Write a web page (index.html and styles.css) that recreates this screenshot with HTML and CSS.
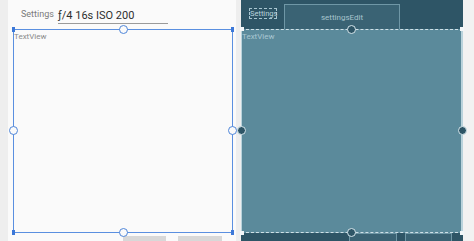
FILE: index.html
```html
<!DOCTYPE html>
<html>
<head>
<meta charset="utf-8">
<link rel="stylesheet" href="styles.css">
</head>
<body>
<div class="editor">
  <div class="design">
    <div class="screen">
      <div class="header">
        <span class="label">Settings</span>
        <span class="edit">ƒ/4 16s ISO 200</span>
      </div>
      <div class="textview">
        <span class="tv-label">TextView</span>
        <span class="sq sq-tl"></span><span class="sq sq-tr"></span>
        <span class="sq sq-bl"></span><span class="sq sq-br"></span>
        <span class="dot dot-t"></span><span class="dot dot-b"></span>
        <span class="dot dot-l"></span><span class="dot dot-r"></span>
      </div>
      <div class="buttons">
        <span class="btn"></span><span class="btn btn2"></span>
      </div>
    </div>
  </div>
  <div class="blueprint">
    <div class="bp-header">
      <span class="bp-label">Settings</span>
      <span class="bp-edit">settingsEdit</span>
    </div>
    <div class="bp-textview">
      <span class="bp-tv-label">TextView</span>
      <span class="wsq wsq-tl"></span><span class="wsq wsq-tr"></span>
      <span class="wsq wsq-bl"></span><span class="wsq wsq-br"></span>
      <span class="bdot bdot-t"></span><span class="bdot bdot-b"></span>
      <span class="bdot bdot-l"></span><span class="bdot bdot-r"></span>
    </div>
    <div class="bp-buttons">
      <span class="bp-btn"></span><span class="bp-btn bp-btn2"></span>
    </div>
  </div>
  <div class="rest"></div>
</div>
</body>
</html>
```
FILE: styles.css
```css
html, body {
  margin: 0;
  padding: 0;
  background: #f0f0f0;
  font-family: Roboto, "Noto Sans", sans-serif;
}
.editor {
  display: flex;
  width: 474px;
  height: 241px;
  overflow: hidden;
}
.design {
  width: 241px;
  flex: none;
  background: #eeeeee;
  padding-left: 8px;
  box-sizing: border-box;
}
.screen {
  width: 228px;
  height: 241px;
  background: #fafafa;
  display: flex;
  flex-direction: column;
}
.header {
  height: 29px;
  flex: none;
  display: flex;
  align-items: flex-start;
  padding-left: 13px;
  box-sizing: border-box;
}
.label {
  font-size: 9px;
  line-height: 11px;
  margin-top: 9px;
  color: #7a7a7a;
  width: 37px;
}
.edit {
  margin-top: 8px;
  width: 110px;
  height: 15px;
  line-height: 15px;
  font-size: 11px;
  color: #2e2e2e;
  border-bottom: 1px solid #9a9a9a;
}
.textview {
  position: relative;
  margin-left: 5px;
  width: 220px;
  height: 204px;
  flex: none;
  box-sizing: border-box;
  border: 1px solid #5a8fe0;
}
.tv-label {
  display: block;
  font-size: 8px;
  line-height: 10px;
  margin-top: 2px;
  color: #8a8a8a;
}
.sq {
  position: absolute;
  width: 3px;
  height: 5px;
  background: #3c78d8;
}
.sq-tl { left: -2px; top: -3px; }
.sq-tr { right: -2px; top: -3px; }
.sq-bl { left: -2px; bottom: -3px; }
.sq-br { right: -2px; bottom: -3px; }
.dot {
  position: absolute;
  width: 7px;
  height: 7px;
  border-radius: 50%;
  border: 1px solid #4f86d9;
  background: #fafafa;
}
.dot-t { left: 105px; top: -5px; }
.dot-b { left: 105px; bottom: -5px; }
.dot-l { left: -5px; top: 96px; }
.dot-r { right: -5px; top: 96px; }
.buttons {
  display: flex;
  margin-top: 3px;
  padding-left: 115px;
  gap: 12px;
}
.btn {
  width: 43px;
  height: 8px;
  background: #d8d8d8;
}
.btn2 { width: 44px; }

.blueprint {
  width: 222px;
  flex: none;
  background: #2e5566;
  display: flex;
  flex-direction: column;
}
.bp-header {
  height: 29px;
  flex: none;
  display: flex;
  align-items: flex-start;
  padding-left: 8px;
  box-sizing: border-box;
}
.bp-label {
  margin-top: 8px;
  height: 11px;
  width: 28px;
  box-sizing: border-box;
  border: 1px dashed #a9c6d1;
  font-size: 7.5px;
  line-height: 9px;
  color: #b9d2db;
  text-align: center;
}
.bp-edit {
  margin-top: 4px;
  margin-left: 7px;
  width: 116px;
  height: 25px;
  box-sizing: border-box;
  border: 1px solid #6f97a6;
  border-bottom: none;
  background: #3a6374;
  font-size: 8px;
  line-height: 25px;
  text-align: center;
  color: #a7c3cd;
}
.bp-textview {
  position: relative;
  height: 204px;
  flex: none;
  box-sizing: border-box;
  background: #5b8a9b;
  border: 1px dashed #cfe0e7;
  border-left-style: solid;
  border-left-color: #b9d3dc;
  border-right-width: 2px;
  border-right-style: solid;
  border-right-color: #b9d3dc;
}
.bp-tv-label {
  display: block;
  font-size: 8px;
  line-height: 10px;
  margin-top: 2px;
  color: #a9c7d2;
}
.wsq {
  position: absolute;
  width: 4px;
  height: 4px;
  background: #f2f6f8;
}
.wsq-tl { left: -2px; top: -3px; }
.wsq-tr { right: -3px; top: -3px; }
.wsq-bl { left: -2px; bottom: -3px; }
.wsq-br { right: -3px; bottom: -3px; }
.bdot {
  position: absolute;
  width: 7px;
  height: 7px;
  border-radius: 50%;
  border: 1px solid #d6e6ec;
  background: #2e5566;
}
.bdot-t { left: 105px; top: -5px; }
.bdot-b { left: 105px; bottom: -5px; }
.bdot-l { left: -5px; top: 96px; }
.bdot-r { right: -6px; top: 96px; }
.bp-buttons {
  display: flex;
  padding-left: 108px;
  gap: 8px;
}
.bp-btn {
  width: 48px;
  height: 10px;
  box-sizing: border-box;
  border: 1px solid #6f97a6;
  border-bottom: none;
  background: #3a6374;
}
.bp-btn2 { width: 47px; }
.rest {
  flex: 1;
  background: #f2f2f2;
}
```
